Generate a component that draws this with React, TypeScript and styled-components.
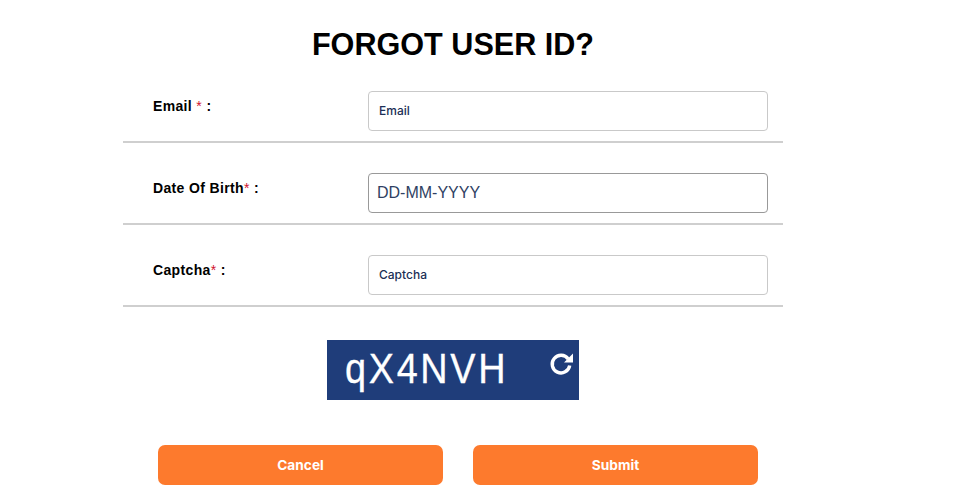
import React, { FC } from "react";
import styled, { createGlobalStyle } from "styled-components";

const fields = [
  { label: "Email", gap: true, placeholder: "Email", type: "email" },
  { label: "Date Of Birth", gap: false, placeholder: "DD-MM-YYYY", type: "date" },
  { label: "Captcha", gap: false, placeholder: "Captcha", type: "text" },
];

const App: FC = () => {
  return (
    <>
      <GlobalStyle />
      <S.Page>
        <S.Title>FORGOT USER ID?</S.Title>
        <S.Form>
          {fields.map((el) => (
            <S.Row key={el.label}>
              <S.Label>
                {el.label}
                {el.gap && " "}
                <S.Star>*</S.Star> :
              </S.Label>
              <S.Input $large={el.type === "date"} placeholder={el.placeholder} />
            </S.Row>
          ))}
        </S.Form>
        <S.CaptchaBox>
          <S.CaptchaText>qX4NVH</S.CaptchaText>
          <S.Refresh>
            <svg width="24" height="24" viewBox="0 0 24 24">
              <path
                d="M19.2 7A8.8 8.8 0 1 0 20.7 13.5"
                fill="none"
                stroke="#fff"
                strokeWidth="3.4"
              />
              <path d="M24 1.5V10.5H15Z" fill="#fff" />
            </svg>
          </S.Refresh>
        </S.CaptchaBox>
        <S.Buttons>
          <S.Btn type="button">Cancel</S.Btn>
          <S.Btn type="button">Submit</S.Btn>
        </S.Buttons>
      </S.Page>
    </>
  );
};

export default App;

const GlobalStyle = createGlobalStyle`
  html, body {
    margin: 0;
    padding: 0;
    background: #fff;
    overflow: hidden;
  }
`;

const S = {
  Page: styled.div`
    width: 660px;
    height: 490px;
    margin-left: 123px;
    font-family: "Liberation Sans", Arial, sans-serif;
  `,

  Title: styled.h1`
    margin: 0;
    padding-top: 27px;
    height: 61px;
    box-sizing: border-box;
    line-height: 35px;
    font-size: 30.6px;
    font-weight: 700;
    text-align: center;
    color: #000;
  `,

  Form: styled.div`
    display: flex;
    flex-direction: column;
  `,

  Row: styled.div`
    display: flex;
    height: 82px;
    box-sizing: border-box;
    padding: 30px 15px 0 30px;
    border-bottom: 2px solid #cfcfcf;
  `,

  Label: styled.label`
    width: 215px;
    padding-top: 7px;
    font-size: 14px;
    line-height: 16px;
    font-weight: 700;
    letter-spacing: 0.35px;
    color: #000;
  `,

  Star: styled.span`
    color: #d0122e;
    font-weight: 400;
  `,

  Input: styled.input<{ $large?: boolean }>`
    width: 400px;
    height: 40px;
    box-sizing: border-box;
    padding: ${({ $large }) => ($large ? "0 8px" : "0 10px 2px")};
    border: 1px solid ${({ $large }) => ($large ? "#999" : "#c9c9c9")};
    border-radius: 4px;
    background: #fff;
    font-family: ${({ $large }) =>
      $large ? '"Liberation Sans", Arial, sans-serif' : "Inter, sans-serif"};
    font-size: ${({ $large }) => ($large ? "16px" : "12px")};
    font-weight: ${({ $large }) => ($large ? 400 : 500)};
    outline: none;

    &::placeholder {
      color: ${({ $large }) => ($large ? "#2f3f63" : "#1b2f56")};
      opacity: 1;
    }
  `,

  CaptchaBox: styled.div`
    display: flex;
    align-items: flex-start;
    justify-content: space-between;
    box-sizing: border-box;
    width: 252px;
    height: 60px;
    margin: 33px 0 0 204px;
    padding: 0 6px 0 18px;
    background: #1f3d7a;
  `,

  CaptchaText: styled.span`
    display: inline-block;
    font-size: 42px;
    line-height: 58px;
    letter-spacing: 3px;
    color: #fff;
    -webkit-text-stroke: 0.3px #fff;
    transform: scaleX(0.9);
    transform-origin: left center;
  `,

  Refresh: styled.span`
    display: flex;
    width: 24px;
    margin-top: 12px;
  `,

  Buttons: styled.div`
    display: flex;
    gap: 30px;
    margin: 45px 0 0 35px;
  `,

  Btn: styled.button`
    width: 285px;
    height: 40px;
    padding: 0;
    border: none;
    border-radius: 7px;
    background: #fd7a2d;
    color: #fff;
    font-family: Inter, sans-serif;
    font-size: 13.7px;
    font-weight: 700;
    cursor: pointer;
  `,
};
